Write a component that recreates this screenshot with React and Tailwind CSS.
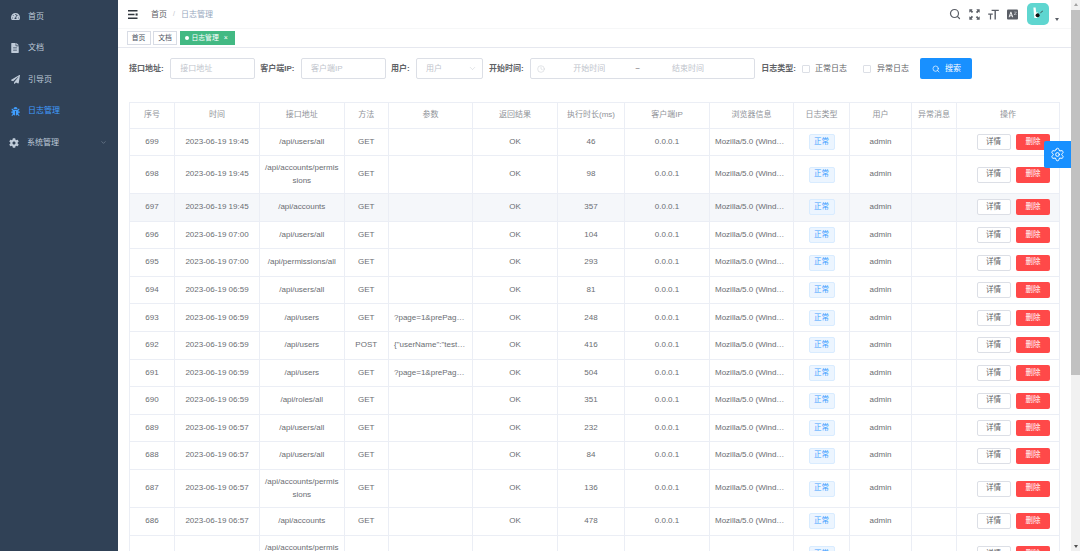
import React from "react";
import { Search, Settings, ChevronDown, Clock } from "lucide-react";
import { FaTachometerAlt, FaFileAlt, FaPaperPlane, FaBug, FaCog } from "react-icons/fa";

const font = "font-['Liberation_Sans','Noto_Sans_CJK_SC',sans-serif]";

const menu = [
  { icon: FaTachometerAlt, label: "首页", size: 9 },
  { icon: FaFileAlt, label: "文档", size: 10 },
  { icon: FaPaperPlane, label: "引导页", size: 9 },
  { icon: FaBug, label: "日志管理", active: true, size: 9 },
  { icon: FaCog, label: "系统管理", arrow: true, size: 10 },
];

const P = "/api/accounts/permissions";
const Q = "?page=1&prePag…";
const rows = [
  [699, "19:45", "/api/users/all", "GET", "", 46],
  [698, "19:45", P, "GET", "", 98],
  [697, "19:45", "/api/accounts", "GET", "", 357, true],
  [696, "07:00", "/api/users/all", "GET", "", 104],
  [695, "07:00", "/api/permissions/all", "GET", "", 293],
  [694, "06:59", "/api/users/all", "GET", "", 81],
  [693, "06:59", "/api/users", "GET", Q, 248],
  [692, "06:59", "/api/users", "POST", '{"userName":"test…', 416],
  [691, "06:59", "/api/users", "GET", Q, 504],
  [690, "06:59", "/api/roles/all", "GET", "", 351],
  [689, "06:57", "/api/users/all", "GET", "", 232],
  [688, "06:57", "/api/users/all", "GET", "", 84],
  [687, "06:57", P, "GET", "", 136],
  [686, "06:57", "/api/accounts", "GET", "", 478],
  [685, "06:56", P, "POST", "", 324],
];

const heads = ["序号", "时间", "接口地址", "方法", "参数", "返回结果", "执行时长(ms)", "客户端IP", "浏览器信息", "日志类型", "用户", "异常消息", "操作"];
const widths = ["w-[45px]", "w-[85px]", "w-[84.5px]", "w-[44.5px]", "w-[84px]", "w-[85px]", "w-[67px]", "w-[85px]", "w-[84px]", "w-[56px]", "w-[62px]", "w-[45px]", "w-[103px]"];

const cell = "border border-[#ebeef5] px-[5px] py-0 text-center align-middle";

function Label({ children, className = "" }) {
  return <span className={`font-bold text-[8px] text-[#606266] whitespace-nowrap ${className}`}>{children}</span>;
}

function Field({ w, ml, children }) {
  return (
    <div className={`${w} ${ml} h-[21px] flex items-center border border-[#dcdfe6] rounded-[2px] bg-white text-[8px] text-[#c0c4cc] shrink-0`}>
      {children}
    </div>
  );
}

function Check({ ml }) {
  return <span className={`${ml} w-[8px] h-[8px] border border-[#dcdfe6] rounded-[1px] bg-white shrink-0`} />;
}

export default function App() {
  return (
    <div className={`${font} flex w-[1080px] h-[551px] overflow-hidden bg-white relative`}>
      <aside className="w-[118px] shrink-0 bg-[#304156] pt-[1px] text-[8px] text-[#bfcbd9]">
        {menu.map((m) => {
          const I = m.icon;
          return (
            <div key={m.label} className={`h-[31.5px] flex items-center ${m.active ? "text-[#409eff]" : ""}`}>
              <span className={`w-[28px] flex justify-center pl-[2px] ${m.arrow ? "pr-[2px]" : ""}`}>
                <I size={m.size} />
              </span>
              <span className={m.arrow ? "-ml-[1px]" : ""}>{m.label}</span>
              {m.arrow && <ChevronDown size={7} className="ml-auto mr-[11px] text-[#7f8d9e]" />}
            </div>
          );
        })}
      </aside>

      <main className="flex-1 min-w-0">
        <header className="h-[29px] flex items-center border-b border-[#f6f7f8] pl-[9.5px]">
          <svg width="10" height="9" viewBox="0 0 10 9" className="text-[#30363d]">
            <path d="M0 .7h9.5M0 4.5h6.5M0 8.3h9.5" stroke="currentColor" strokeWidth="1.4" />
            <path d="M7.6 3.4h2v2.2h-2z" fill="currentColor" />
          </svg>
          <span className="ml-[13.5px] pt-[1px] text-[8px] text-[#606266]">首页</span>
          <span className="mx-[6px] pt-[1px] text-[7px] text-[#c0c4cc]">/</span>
          <span className="pt-[1px] text-[8px] text-[#97a8be]">日志管理</span>
          <div className="ml-auto flex items-center text-[#5a5e66] relative">
            <Search size={12} strokeWidth={2.4} className="mr-[8px]" />
            <svg width="11" height="11" viewBox="0 0 11 11" className="mr-[8px]" fill="currentColor">
              <path d="M.3.3h3.4L2.7 1.3l1.5 1.5-1.3 1.3L1.4 2.6.3 3.7zM10.7.3v3.4L9.7 2.7 8.2 4.2 6.9 2.9l1.5-1.5L7.3.3zM.3 10.7V7.3l1 1 1.5-1.5 1.3 1.3-1.5 1.5 1.1 1.1zM10.7 10.7H7.3l1-1-1.5-1.5 1.3-1.3 1.5 1.5 1.1-1.1z" />
            </svg>
            <svg width="11" height="11" viewBox="0 0 11 11" className="mr-[8px]" fill="currentColor">
              <path d="M3.6.8h7.2v1.3H7.9v8.4H6.5V2.1H3.6zM.2 4.6h4.6v1.1H3.1v4.8H1.9V5.7H.2z" />
            </svg>
            <svg width="11" height="11" viewBox="0 0 11 11" className="mr-[5px]">
              <rect width="11" height="10" y=".5" rx="1" fill="#5a5e66" />
              <path d="M1.6 8.3 3.5 2.8h.8l1.9 5.5H5.3L5 7.2H2.9l-.4 1.1zm1.6-1.9h1.4l-.7-2.1z" fill="#fff" />
              <path d="M7 2.8h2.6v.6L7.6 5.4h2v.5H7v-.6l2-2H7z" fill="#c9ccd1" />
            </svg>
            <div className="mx-[4px] w-[22.5px] h-[22.5px] rounded-[5px] bg-[#5fd6d0] flex items-center justify-center">
              <svg width="16" height="16" viewBox="0 0 16 16">
                <path d="M3.4 1.5h2.2l.6 5 1.4 5.5H4.4L3.9 8z" fill="#fff" />
                <circle cx="7.6" cy="9.2" r="2" fill="#111" />
                <path d="M5.6 7.4 7.6 6.6" stroke="#fff" strokeWidth="1" />
                <path d="M10.4 6.8l2.4-1.8" stroke="#333" strokeWidth=".8" />
              </svg>
            </div>
            <span className="mt-[11px] mr-[12px] ml-[2px] w-0 h-0 border-x-[2.5px] border-x-transparent border-t-[3px] border-t-[#5a5e66]" />
          </div>
        </header>

        <nav className="h-[18.5px] flex items-center gap-[2.5px] pl-[8.5px] border-b-[1.5px] border-[#e6e8ef] text-[6.8px]">
          <span className="h-[14.5px] w-[24px] flex items-center justify-center border border-[#d8dce5] text-[#495060]">首页</span>
          <span className="h-[14.5px] w-[24px] flex items-center justify-center border border-[#d8dce5] text-[#495060]">文档</span>
          <span className="h-[14.5px] w-[55.5px] flex items-center bg-[#42b983] text-white pl-[5px]">
            <span className="w-[4px] h-[4px] rounded-full bg-white mr-[3px]" />
            日志管理
            <span className="ml-[5px] text-[7px] leading-none">×</span>
          </span>
        </nav>

        <section className="pl-[11px] pr-[12px]">
          <div className="h-[21px] mt-[10.5px] flex items-center">
            <Label>接口地址:</Label>
            <Field w="w-[85px]" ml="ml-[6.5px]"><span className="pl-[9px]">接口地址</span></Field>
            <Label className="ml-[5px]">客户端IP:</Label>
            <Field w="w-[85px]" ml="ml-[6.5px]"><span className="pl-[9px]">客户端IP</span></Field>
            <Label className="ml-[5px]">用户:</Label>
            <Field w="w-[67px]" ml="ml-[6.5px]">
              <span className="pl-[9px]">用户</span>
              <ChevronDown size={9} className="ml-auto mr-[5px]" strokeWidth={1.2} />
            </Field>
            <Label className="ml-[6px]">开始时间:</Label>
            <Field w="w-[225px]" ml="ml-[6.5px]">
              <Clock size={8} className="ml-[6px]" strokeWidth={1.3} />
              <span className="ml-[28px]">开始时间</span>
              <span className="ml-[30px] text-[#606266]">~</span>
              <span className="ml-[32px]">结束时间</span>
            </Field>
            <Label className="ml-[6px]">日志类型:</Label>
            <Check ml="ml-[6px]" />
            <span className="ml-[5px] text-[8px] text-[#606266] whitespace-nowrap">正常日志</span>
            <Check ml="ml-[16px]" />
            <span className="ml-[6px] text-[8px] text-[#606266] whitespace-nowrap">异常日志</span>
            <button className="ml-[11.5px] w-[52px] h-[21px] rounded-[2px] bg-[#1890ff] text-white text-[8px] flex items-center justify-center shrink-0">
              <Search size={8} className="mr-[5px]" />
              搜索
            </button>
          </div>

          <table className="mt-[23px] table-fixed border-collapse w-[930px] text-[8px] leading-[12.5px] text-[#6a6d72]">
            <thead>
              <tr className="h-[25.5px]">
                {heads.map((h, i) => (
                  <th key={h} className={`${cell} ${widths[i]} font-normal text-[#909399]`}>{h}</th>
                ))}
              </tr>
            </thead>
            <tbody>
              {rows.map((r) => {
                const two = r[2] === P;
                return (
                  <tr key={r[0]} className={`${two ? "h-[38px]" : "h-[27.6px]"} ${r[6] ? "bg-[#f5f7fa]" : ""}`}>
                    <td className={cell}>{r[0]}</td>
                    <td className={`${cell} whitespace-nowrap`}>2023-06-19 {r[1]}</td>
                    <td className={`${cell} break-all`}>{r[2]}</td>
                    <td className={cell}>{r[3]}</td>
                    <td className={`${cell} !text-left whitespace-nowrap`}>{r[4]}</td>
                    <td className={cell}>OK</td>
                    <td className={cell}>{r[5]}</td>
                    <td className={cell}>0.0.0.1</td>
                    <td className={`${cell} !text-left whitespace-nowrap`}>Mozilla/5.0 (Wind…</td>
                    <td className={cell}>
                      <span className="mx-auto w-[26px] h-[16px] flex items-center justify-center bg-[#ecf5ff] border border-[#d9ecff] rounded-[2px] text-[#409eff] text-[7.5px]">正常</span>
                    </td>
                    <td className={cell}>admin</td>
                    <td className={cell}></td>
                    <td className={`${cell} !pl-[19.5px] !pr-0`}>
                      <div className="flex gap-[5.5px]">
                        <button className="w-[34px] h-[16px] flex items-center justify-center border border-[#dcdfe6] rounded-[2px] bg-white text-[7.5px] text-[#606266]">详情</button>
                        <button className="w-[34px] h-[16px] flex items-center justify-center rounded-[2px] bg-[#ff4949] text-white text-[7.5px]">删除</button>
                      </div>
                    </td>
                  </tr>
                );
              })}
            </tbody>
          </table>
        </section>
      </main>

      <div className="w-[9px] shrink-0 bg-[#f1f1f1] flex flex-col items-center">
        <span className="mt-[3px] h-0 w-0 border-x-[2.5px] border-x-transparent border-b-[3px] border-b-[#a3a3a3]" />
        <div className="mt-[4px] h-[365px] w-full bg-[#c1c1c1]" />
        <span className="mt-auto mb-[3px] h-0 w-0 border-x-[2.5px] border-x-transparent border-t-[3px] border-t-[#505050]" />
      </div>

      <button className="absolute left-[1043.5px] top-[140.5px] w-[27px] h-[27px] bg-[#1890ff] rounded-l-[2px] flex items-center justify-center text-white">
        <Settings size={15} strokeWidth={1.6} />
      </button>
    </div>
  );
}
